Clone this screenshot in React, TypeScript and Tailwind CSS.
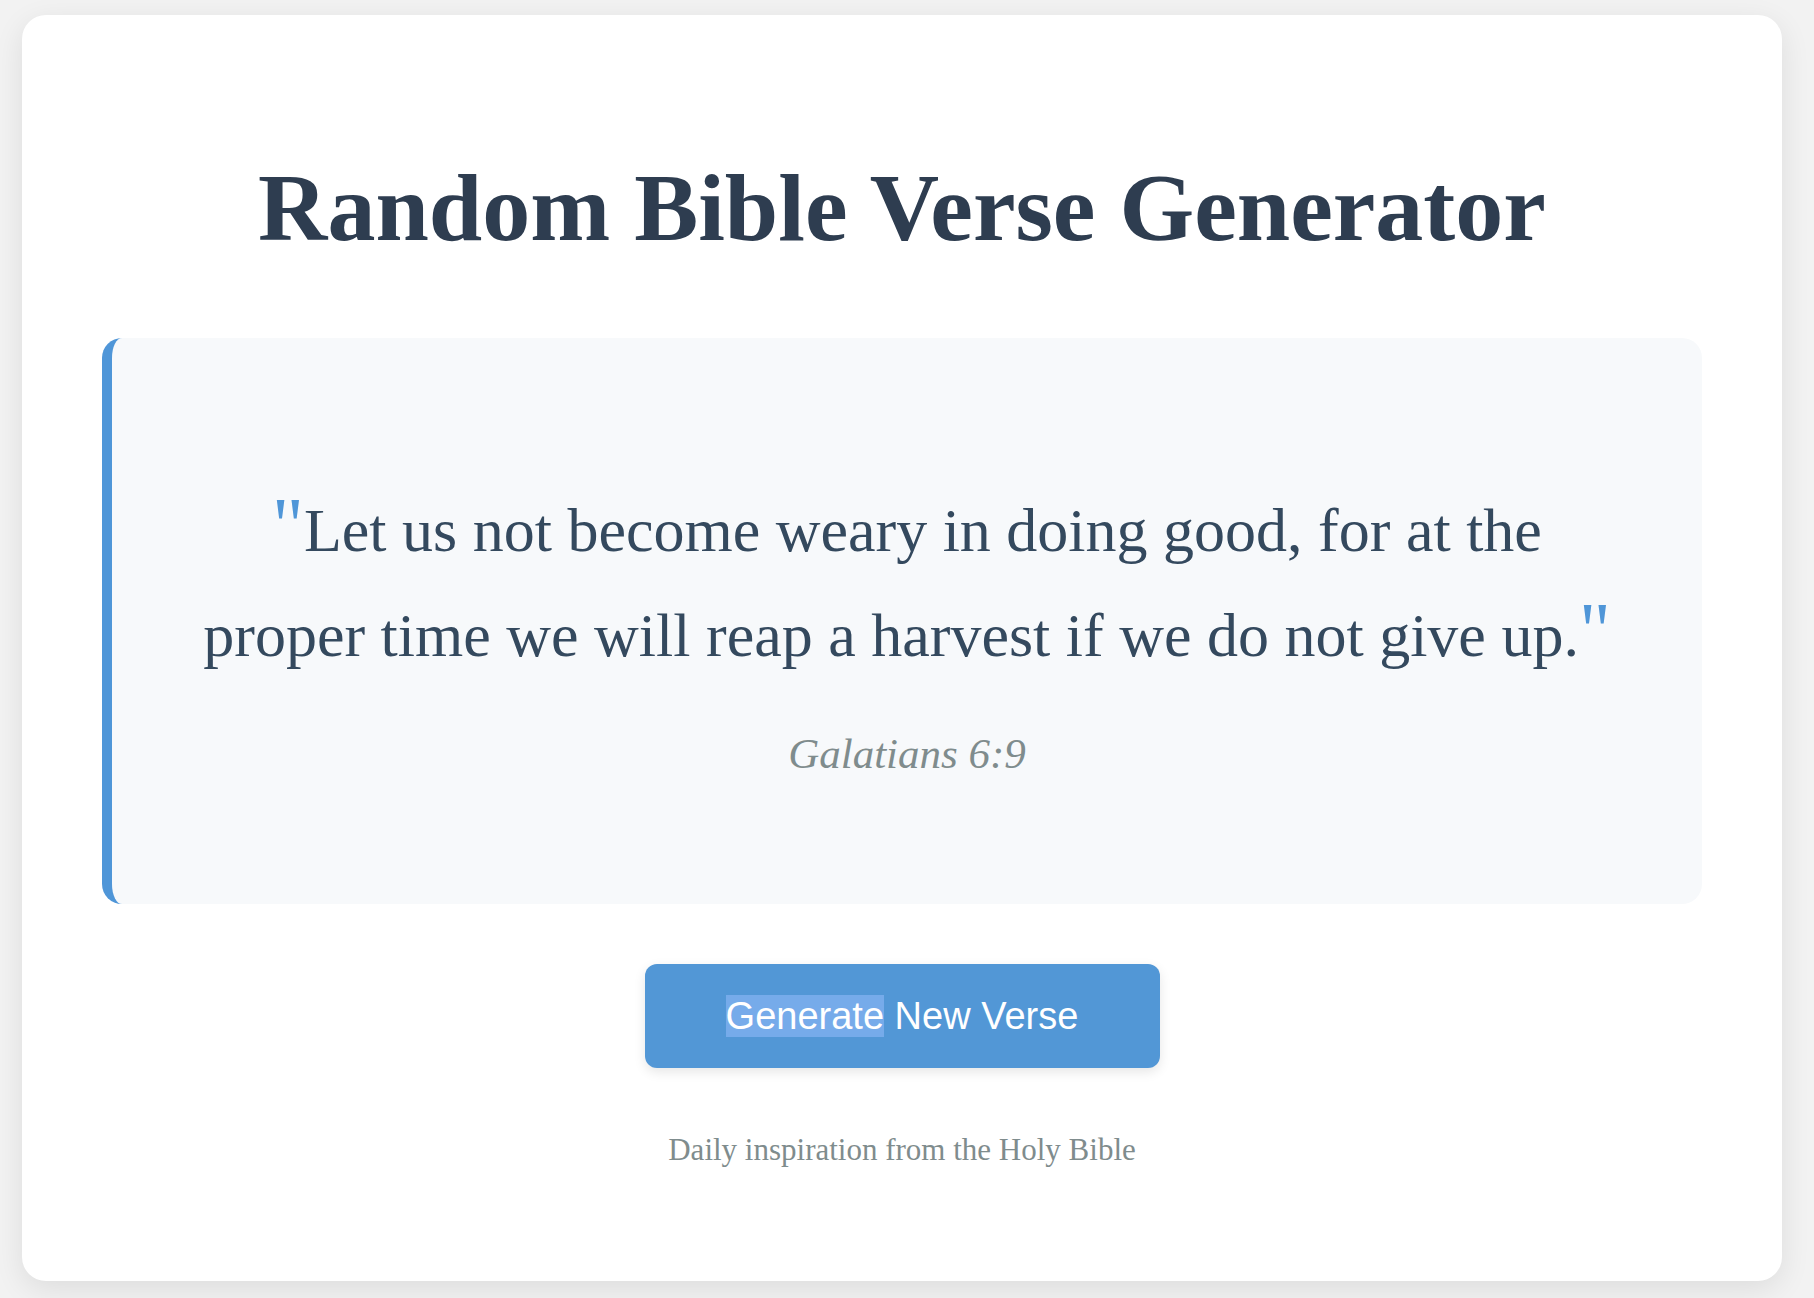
import { useState } from "react";

/* ================= DATA ================= */

type Verse = {
  text: string;
  reference: string;
};

const VERSES: Verse[] = [
  {
    text: "Let us not become weary in doing good, for at the proper time we will reap a harvest if we do not give up.",
    reference: "Galatians 6:9",
  },
  {
    text: "Trust in the Lord with all your heart and lean not on your own understanding.",
    reference: "Proverbs 3:5",
  },
  {
    text: "I can do all this through him who gives me strength.",
    reference: "Philippians 4:13",
  },
];

export default function App() {
  const [index, setIndex] = useState(0);

  const verse = VERSES[index];

  const nextVerse = () => {
    setIndex((prev) => (prev + 1) % VERSES.length);
  };

  return (
    <main className="min-h-screen bg-[#f2f2f2] pt-[15px] pl-[22px] font-['Liberation_Serif',Georgia,serif]">
      {/* CARD */}
      <div className="w-[1760px] h-[1266px] bg-white rounded-[24px] shadow-[0_8px_30px_rgba(0,0,0,0.09)] px-[80px] pt-[145px] flex flex-col">
        <h1 className="text-center text-[96px] leading-none font-bold text-[#2e3d50]">
          Random Bible Verse Generator
        </h1>

        {/* VERSE BOX */}
        <div className="mt-[82px] bg-[#f7f9fb] border-l-[10px] border-[#4f96d8] rounded-[20px] px-[81px] pt-[140px] pb-[129px] text-center">
          <p className="text-[62px] leading-[105px] text-[#34495e]">
            <span className="text-[78px] leading-none text-[#4f96d8]">"</span>
            {verse.text}
            <span className="text-[78px] leading-none text-[#4f96d8]">"</span>
          </p>

          <p className="mt-[44px] text-[43px] leading-none italic text-[#7f8c8d]">
            {verse.reference}
          </p>
        </div>

        {/* BUTTON */}
        <div className="mt-[60px] flex justify-center">
          <button
            onClick={nextVerse}
            className="w-[515px] h-[104px] bg-[#5297d6] rounded-[12px] shadow-[0_4px_12px_rgba(0,0,0,0.1)] text-white text-[38px] font-['Liberation_Sans',Arial,sans-serif]"
          >
            <span className="bg-[#76abea]">Generate</span> New Verse
          </button>
        </div>

        <p className="mt-[66px] text-center text-[31px] leading-none text-[#7f8c8d]">
          Daily inspiration from the Holy Bible
        </p>
      </div>
    </main>
  );
}
